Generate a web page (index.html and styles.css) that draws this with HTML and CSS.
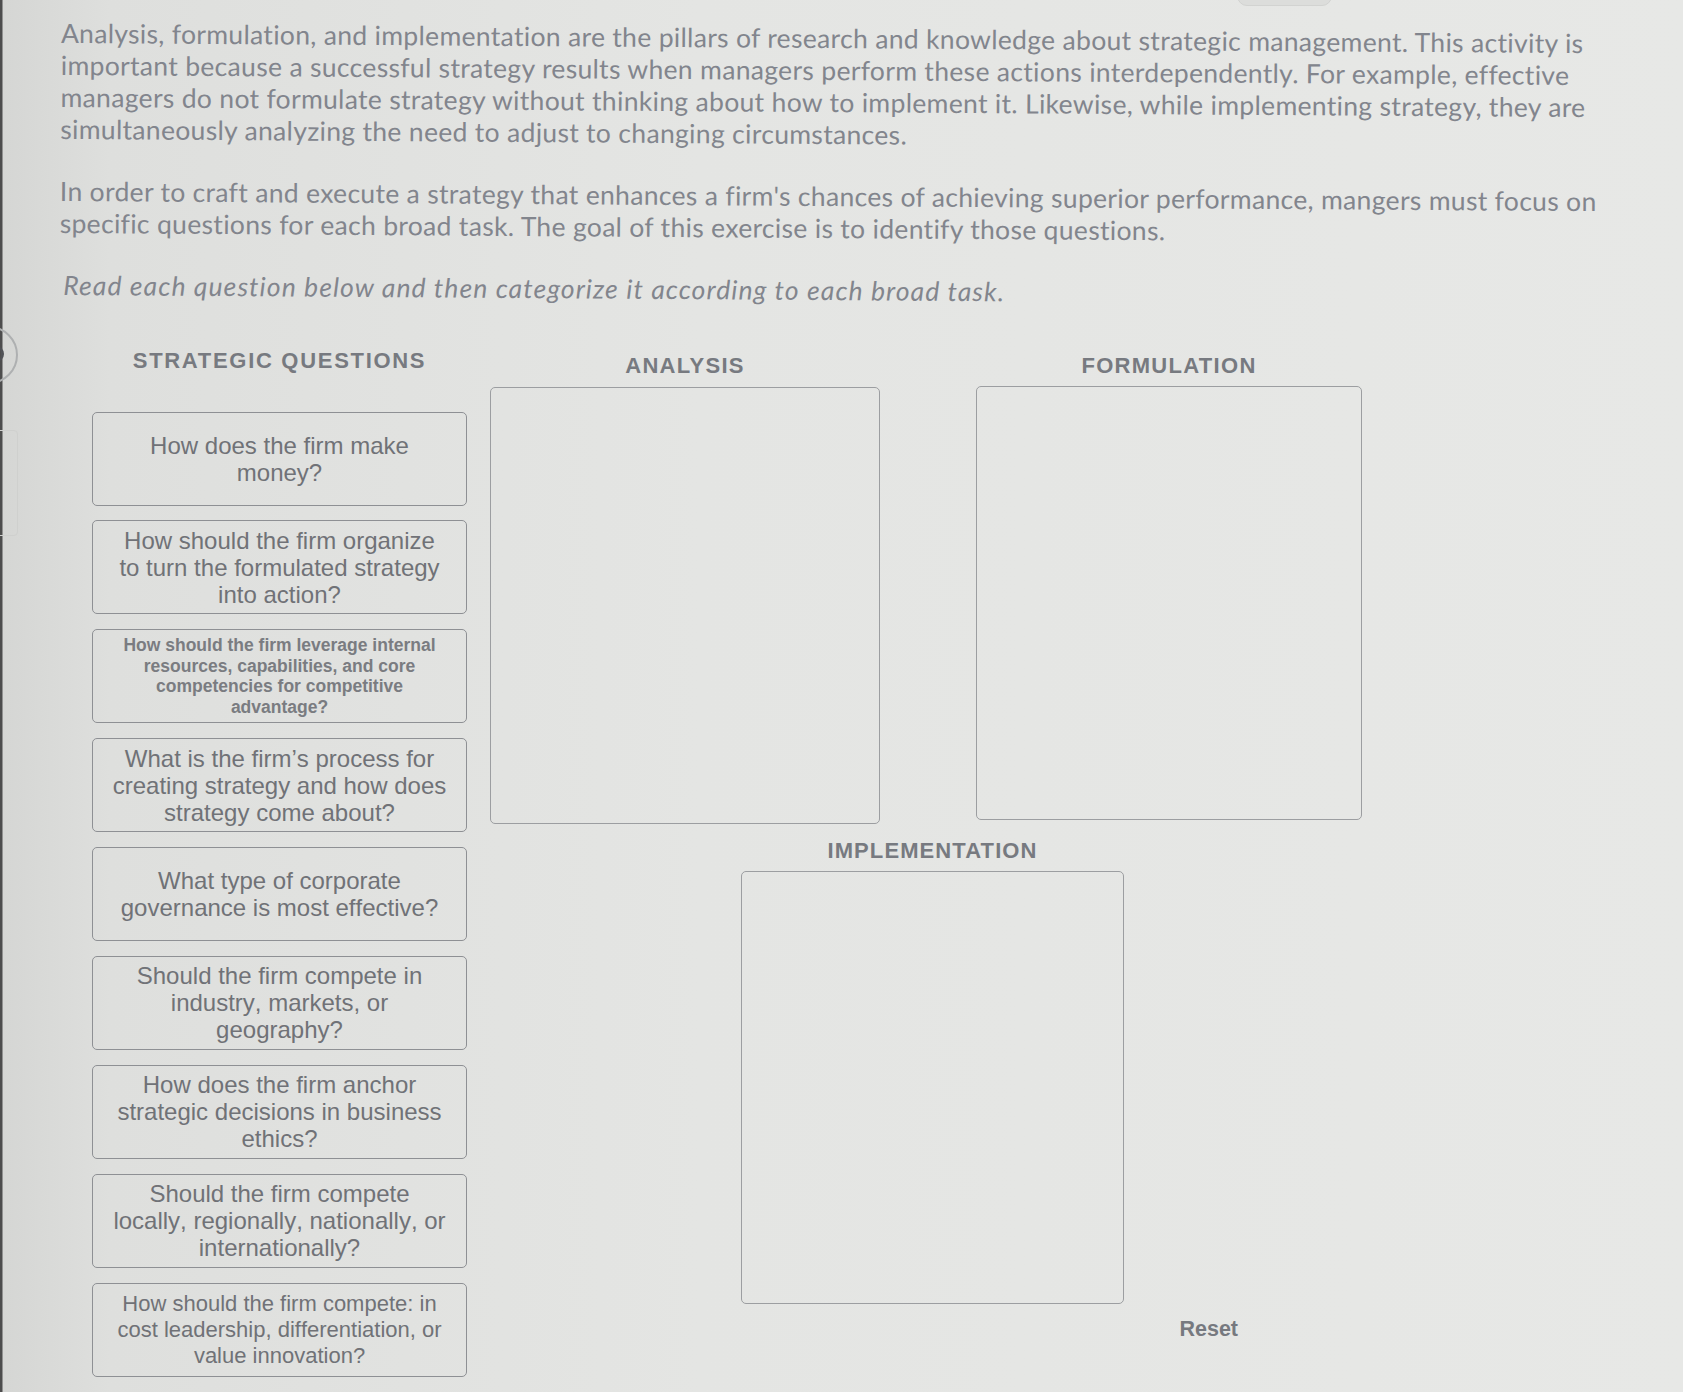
FILE: index.html
```html
<!DOCTYPE html>
<html lang="en">
<head>
<meta charset="utf-8">
<title>Strategic Questions</title>
<link rel="stylesheet" href="styles.css">
</head>
<body>
<div class="page">
  <div class="edge-circle"><span class="edge-glyph"></span></div>
  <div class="edge-tab"></div>
  <div class="top-tab"></div>

  <div class="intro">
    <p>Analysis, formulation, and implementation are the pillars of research and knowledge about strategic management. This activity is<br>important because a successful strategy results when managers perform these actions interdependently. For example, effective<br>managers do not formulate strategy without thinking about how to implement it. Likewise, while implementing strategy, they are<br>simultaneously analyzing the need to adjust to changing circumstances.</p>
    <p class="p-second">In order to craft and execute a strategy that enhances a firm's chances of achieving superior performance, mangers must focus on<br>specific questions for each broad task. The goal of this exercise is to identify those questions.</p>
    <p class="instr">Read each question below and then categorize it according to each broad task.</p>
  </div>

  <div class="board">
    <section class="questions">
      <h2 class="col-title col-title-wide">STRATEGIC QUESTIONS</h2>
      <ul class="q-list">
        <li class="q-card">How does the firm make money?</li>
        <li class="q-card">How should the firm organize to turn the formulated strategy into action?</li>
        <li class="q-card q-dense">How should the firm leverage internal resources, capabilities, and core competencies for competitive advantage?</li>
        <li class="q-card">What is the firm’s process for creating strategy and how does strategy come about?</li>
        <li class="q-card">What type of corporate governance is most effective?</li>
        <li class="q-card">Should the firm compete in industry, markets, or geography?</li>
        <li class="q-card">How does the firm anchor strategic decisions in business ethics?</li>
        <li class="q-card">Should the firm compete locally, regionally, nationally, or internationally?</li>
        <li class="q-card q-small">How should the firm compete: in cost leadership, differentiation, or value innovation?</li>
      </ul>
    </section>

    <section class="targets">
      <div class="target-row">
        <div class="zone zone-analysis">
          <h2 class="col-title">ANALYSIS</h2>
          <div class="drop drop-analysis"></div>
        </div>
        <div class="zone zone-formulation">
          <h2 class="col-title">FORMULATION</h2>
          <div class="drop drop-formulation"></div>
        </div>
      </div>
      <div class="zone zone-impl">
        <h2 class="col-title col-title-tight">IMPLEMENTATION</h2>
        <div class="drop drop-impl"></div>
      </div>
      <div class="actions">
        <button class="reset" type="button">Reset</button>
      </div>
    </section>
  </div>
</div>
</body>
</html>
```

FILE: styles.css
```css
html, body {
  margin: 0;
  padding: 0;
}

body {
  background: linear-gradient(90deg, #4d4d4d 0, #4d4d4d 2px, #d5d6d4 3px, #dedfdd 110px, #e4e5e3 700px, #e7e8e6 1683px);
  font-family: "Liberation Sans", Arial, sans-serif;
}

.page {
  position: relative;
  width: 1683px;
  height: 1392px;
  overflow: hidden;
}

/* decorations cut off by the screen edges */
.edge-circle {
  position: absolute;
  left: -40px;
  top: 326px;
  width: 54px;
  height: 54px;
  border: 2px solid #aeb0b1;
  border-radius: 50%;
}

.edge-glyph {
  position: absolute;
  right: 12px;
  top: 18px;
  width: 8px;
  height: 16px;
  border-right: 3px solid #505256;
  border-radius: 0 8px 8px 0;
}

.edge-tab {
  position: absolute;
  left: -10px;
  top: 430px;
  width: 26px;
  height: 104px;
  border: 1px solid #cfd0ce;
  border-radius: 4px;
}

.top-tab {
  position: absolute;
  left: 1237px;
  top: -20px;
  width: 93px;
  height: 24px;
  border: 1px solid #d2d3d1;
  border-radius: 10px;
  background: #dcdddb;
}

/* intro text */
.intro {
  padding: 17px 0 0 61px;
  font-family: Lato, "Open Sans", sans-serif;
  font-size: 26.5px;
  line-height: 32px;
  letter-spacing: 0.32px;
  color: #82858d;
  transform: rotate(0.38deg);
  transform-origin: 61px 30px;
}

.intro p {
  margin: 0;
  white-space: nowrap;
}

.intro .p-second {
  margin-top: 29.5px;
}

.intro .instr {
  margin-top: 30px;
  font-style: italic;
  letter-spacing: 1.1px;
  padding-left: 4px;
}

/* board */
.board {
  display: flex;
  align-items: flex-start;
  padding: 47px 0 0 92px;
}

.col-title {
  margin: 0;
  font-family: "Liberation Sans", Arial, sans-serif;
  font-weight: 700;
  font-size: 22px;
  line-height: 26px;
  letter-spacing: 1.3px;
  color: #777a80;
  text-align: center;
}

.col-title-wide {
  letter-spacing: 1.7px;
}

.col-title-tight {
  letter-spacing: 1.1px;
}

.questions {
  width: 375px;
  flex: none;
}

.q-list {
  list-style: none;
  margin: 38px 0 0;
  padding: 0;
  display: flex;
  flex-direction: column;
  gap: 14.9px;
}

.q-card {
  box-sizing: border-box;
  height: 94px;
  padding: 0 18.25px;
  border: 1.5px solid #8e9094;
  border-radius: 5px;
  display: flex;
  align-items: center;
  justify-content: center;
  text-align: center;
  font-family: "Liberation Sans", Arial, sans-serif;
  font-size: 24px;
  line-height: 27px;
  color: #707277;
  font-kerning: none;
}

.q-dense {
  font-weight: 700;
  font-size: 17.5px;
  line-height: 20.5px;
  color: #7a7c81;
}

.q-small {
  font-size: 22px;
  line-height: 26px;
}

.targets {
  margin-left: 23px;
  padding-top: 5px;
  flex: none;
}

.target-row {
  display: flex;
  gap: 96px;
}

.zone-analysis {
  width: 390px;
}

.zone-formulation {
  width: 386px;
}

.drop {
  box-sizing: border-box;
  border: 1.5px solid #9c9ea1;
  border-radius: 5px;
}

.drop-analysis {
  margin-top: 8px;
  height: 437px;
}

.drop-formulation {
  margin-top: 7px;
  height: 434px;
}

.zone-impl {
  width: 383px;
  margin: 14px 0 0 251px;
}

.drop-impl {
  margin-top: 7px;
  height: 433px;
}

.actions {
  width: 872px;
  box-sizing: border-box;
  padding-right: 124px;
  margin-top: 12.5px;
  display: flex;
  justify-content: flex-end;
}

.reset {
  background: none;
  border: 0;
  padding: 0;
  font-family: "Liberation Sans", Arial, sans-serif;
  font-weight: 700;
  font-size: 21.5px;
  line-height: 26px;
  color: #76797f;
  cursor: pointer;
}
```
